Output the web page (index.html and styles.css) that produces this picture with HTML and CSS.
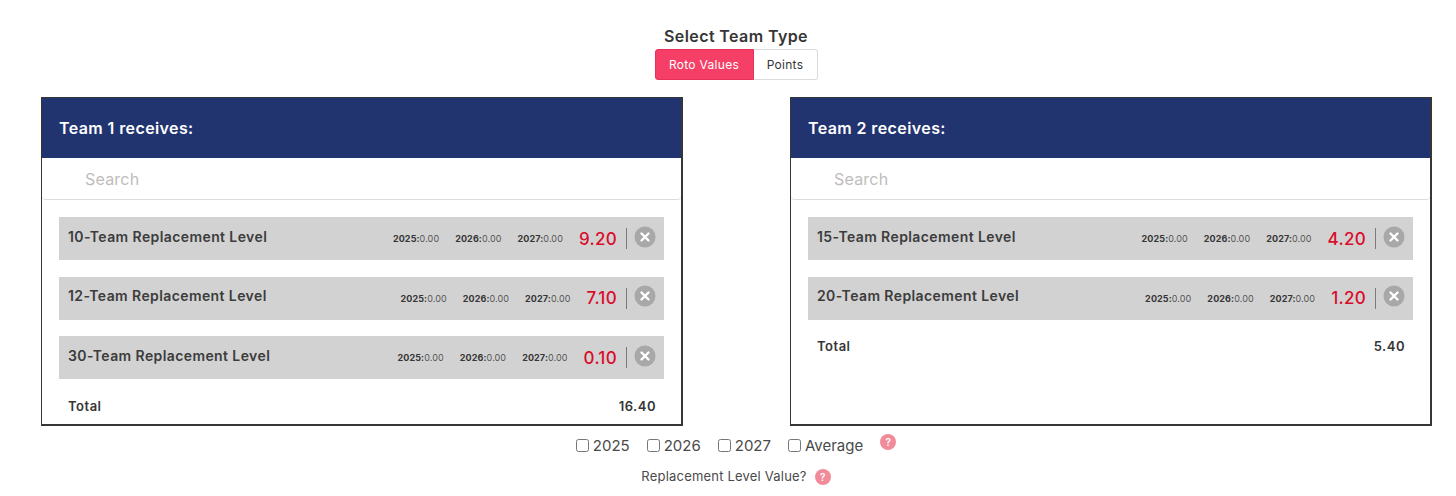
FILE: index.html
```html
<!DOCTYPE html>
<html lang="en">
<head>
<meta charset="utf-8">
<title>Trade Calculator</title>
<link rel="stylesheet" href="styles.css">
</head>
<body>
<main class="page">
  <section class="type-select">
    <h2 class="type-title">Select Team Type</h2>
    <div class="toggle">
      <button class="toggle-btn active">Roto Values</button>
      <button class="toggle-btn">Points</button>
    </div>
  </section>
  <section class="teams">
    <article class="team">
      <header class="team-head">Team 1 receives:</header>
      <div class="search"><span class="search-ph">Search</span></div>
      <div class="team-body">
        <div class="item">
          <span class="item-name">10-Team Replacement Level</span>
          <span class="years"><span class="yr"><b>2025:</b>0.00</span><span class="yr"><b>2026:</b>0.00</span><span class="yr"><b>2027:</b>0.00</span></span>
          <span class="val">9.20</span><span class="sep"></span>
          <span class="rm"><svg viewBox="0 0 22 22" width="22" height="22"><circle cx="11" cy="11" r="10.5" fill="#a8a8a8"/><path d="M7.5 7.5l7 7M14.5 7.5l-7 7" stroke="#fff" stroke-width="2.4" stroke-linecap="round"/></svg></span>
        </div>
        <div class="item">
          <span class="item-name">12-Team Replacement Level</span>
          <span class="years"><span class="yr"><b>2025:</b>0.00</span><span class="yr"><b>2026:</b>0.00</span><span class="yr"><b>2027:</b>0.00</span></span>
          <span class="val">7.10</span><span class="sep"></span>
          <span class="rm"><svg viewBox="0 0 22 22" width="22" height="22"><circle cx="11" cy="11" r="10.5" fill="#a8a8a8"/><path d="M7.5 7.5l7 7M14.5 7.5l-7 7" stroke="#fff" stroke-width="2.4" stroke-linecap="round"/></svg></span>
        </div>
        <div class="item">
          <span class="item-name">30-Team Replacement Level</span>
          <span class="years"><span class="yr"><b>2025:</b>0.00</span><span class="yr"><b>2026:</b>0.00</span><span class="yr"><b>2027:</b>0.00</span></span>
          <span class="val">0.10</span><span class="sep"></span>
          <span class="rm"><svg viewBox="0 0 22 22" width="22" height="22"><circle cx="11" cy="11" r="10.5" fill="#a8a8a8"/><path d="M7.5 7.5l7 7M14.5 7.5l-7 7" stroke="#fff" stroke-width="2.4" stroke-linecap="round"/></svg></span>
        </div>
        <div class="total"><span>Total</span><span>16.40</span></div>
      </div>
    </article>
    <article class="team">
      <header class="team-head">Team 2 receives:</header>
      <div class="search"><span class="search-ph">Search</span></div>
      <div class="team-body">
        <div class="item">
          <span class="item-name">15-Team Replacement Level</span>
          <span class="years"><span class="yr"><b>2025:</b>0.00</span><span class="yr"><b>2026:</b>0.00</span><span class="yr"><b>2027:</b>0.00</span></span>
          <span class="val">4.20</span><span class="sep"></span>
          <span class="rm"><svg viewBox="0 0 22 22" width="22" height="22"><circle cx="11" cy="11" r="10.5" fill="#a8a8a8"/><path d="M7.5 7.5l7 7M14.5 7.5l-7 7" stroke="#fff" stroke-width="2.4" stroke-linecap="round"/></svg></span>
        </div>
        <div class="item">
          <span class="item-name">20-Team Replacement Level</span>
          <span class="years"><span class="yr"><b>2025:</b>0.00</span><span class="yr"><b>2026:</b>0.00</span><span class="yr"><b>2027:</b>0.00</span></span>
          <span class="val">1.20</span><span class="sep"></span>
          <span class="rm"><svg viewBox="0 0 22 22" width="22" height="22"><circle cx="11" cy="11" r="10.5" fill="#a8a8a8"/><path d="M7.5 7.5l7 7M14.5 7.5l-7 7" stroke="#fff" stroke-width="2.4" stroke-linecap="round"/></svg></span>
        </div>
        <div class="total"><span>Total</span><span>5.40</span></div>
      </div>
    </article>
  </section>
  <section class="options">
    <label class="opt"><input type="checkbox" class="check">2025</label>
    <label class="opt"><input type="checkbox" class="check">2026</label>
    <label class="opt"><input type="checkbox" class="check">2027</label>
    <label class="opt"><input type="checkbox" class="check">Average</label>
    <span class="help help-top">?</span>
  </section>
  <p class="repl">Replacement Level Value?<span class="help">?</span></p>
</main>
</body>
</html>
```

FILE: styles.css
```css
* { box-sizing: border-box; }
html, body { margin: 0; padding: 0; }
body {
  background: #fff;
  color: #363636;
  font-family: Inter, "Liberation Sans", sans-serif;
  height: 496px;
  overflow: hidden;
}
.page { padding-top: 26px; }
.type-select { display: flex; flex-direction: column; align-items: center; padding-left: 16px; }
.type-title {
  margin: 0;
  font-size: 16px;
  line-height: 20px;
  font-weight: 600;
  letter-spacing: 0.4px;
  color: #363636;
}
.toggle { display: flex; margin-top: 3px; }
.toggle-btn {
  height: 31px;
  font: 400 12px/1 Inter, "Liberation Sans", sans-serif;
  letter-spacing: 0.3px;
  color: #363636;
  background: #fff;
  border: 1px solid #dbdbdb;
  border-left: 0;
  border-radius: 0 3px 3px 0;
  padding: 0;
  width: 64px;
}
.toggle-btn.active {
  width: 99px;
  background: #f63f66;
  border: 1px solid #e8315a;
  border-radius: 3px 0 0 3px;
  color: #fff;
}
.teams {
  display: flex;
  justify-content: space-between;
  padding: 0 24px 0 41px;
  margin-top: 17px;
}
.team {
  width: 642px;
  height: 329px;
  border-style: solid;
  border-color: #363636;
  border-width: 1.5px 2px 2px 1.5px;
  overflow: hidden;
  display: flex;
  flex-direction: column;
}
.team-head {
  height: 60px;
  flex: none;
  background: #22346f;
  color: #fff;
  font-size: 16px;
  font-weight: 600;
  letter-spacing: 0.4px;
  display: flex;
  align-items: center;
  padding-left: 17px;
}
.search {
  height: 42px;
  flex: none;
  border-bottom: 1px solid #dbdbdb;
  border-radius: 0 0 4px 4px;
  display: flex;
  align-items: center;
  padding-left: 43px;
}
.search-ph { color: #bdbdbd; font-size: 16px; letter-spacing: 0.2px; position: relative; top: 0.5px; }
.team-body { padding: 17px 17px 0 17px; flex: 1; }
.item {
  height: 43px;
  background: #d2d2d2;
  margin-bottom: 16.5px;
  display: flex;
  align-items: center;
  padding: 0 8px 0 9px;
}
.item-name { font-size: 14px; font-weight: 600; letter-spacing: 0.4px; color: #3c3c3c; margin-right: auto; position: relative; top: -2.5px; }
.years { display: flex; gap: 16px; margin-right: 16px; }
.yr { font-size: 9px; letter-spacing: 0.1px; color: #555; white-space: nowrap; }
.yr b { font-weight: 700; color: #363636; }
.val { font-size: 17px; font-weight: 500; letter-spacing: 0.3px; color: #d90d2b; margin-right: 9px; }
.sep { width: 1px; height: 21px; background: #7a7a7a; margin-right: 7px; }
.rm { width: 22px; height: 22px; display: block; position: relative; top: -2px; }
.rm svg { display: block; }
.total {
  display: flex;
  justify-content: space-between;
  font-size: 13px;
  font-weight: 600;
  letter-spacing: 0.5px;
  padding: 2px 8px 0 9px;
  color: #363636;
}
.options {
  display: flex;
  justify-content: center;
  align-items: center;
  height: 20px;
  margin-top: 9px;
  padding-left: 16px;
  font-size: 15px;
  color: #4a4a4a;
}
.opt { display: flex; align-items: center; margin-right: 17px; }
.check { width: 13px; height: 13px; margin: 0 4px 0 0; }
.help {
  display: inline-block;
  width: 16px;
  height: 16px;
  border-radius: 50%;
  background: #f28b99;
  color: #fff;
  font-size: 10px;
  font-weight: 600;
  line-height: 16px;
  text-align: center;
}
.help-top { margin-left: 0; position: relative; top: -3px; }
.repl {
  margin: 11px 0 0;
  padding-left: 16px;
  text-align: center;
  font-size: 13px;
  letter-spacing: 0.2px;
  line-height: 20px;
  color: #4a4a4a;
}
.repl .help { margin-left: 8px; vertical-align: middle; letter-spacing: 0; }
```
